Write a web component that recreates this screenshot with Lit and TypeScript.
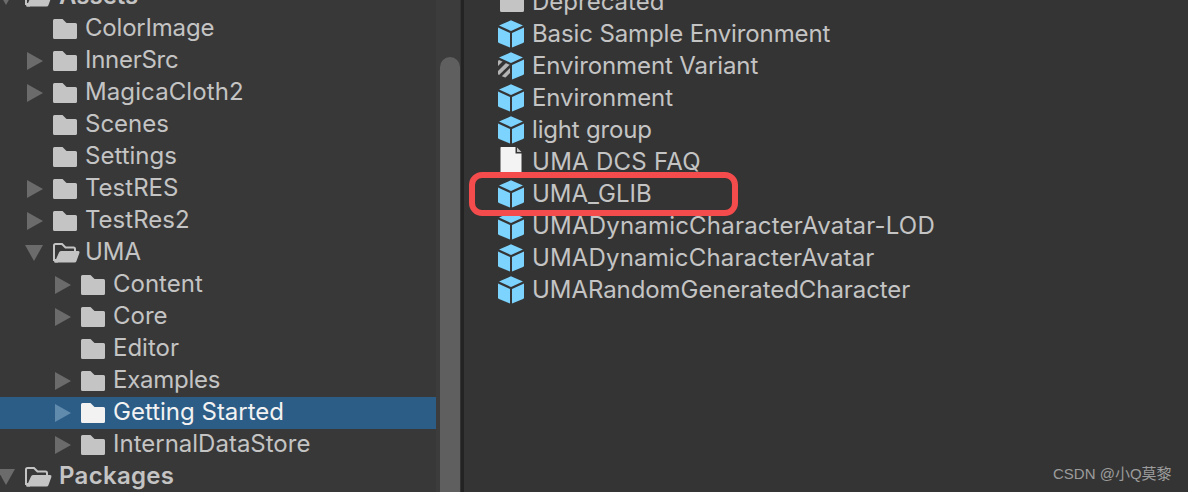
import { LitElement, html, css } from "lit";
import { customElement } from "lit/decorators.js";
import { styleMap } from "lit/directives/style-map.js";

type TreeRow = { name: string; level: number; arrow?: "right" | "down"; open?: boolean; bold?: boolean; selected?: boolean; ls?: number };

const tree: TreeRow[] = [
  { name: "Assets", level: 0, arrow: "down", open: true, bold: true },
  { name: "ColorImage", level: 1, ls: -0.2 },
  { name: "InnerSrc", level: 1, arrow: "right", ls: -0.27 },
  { name: "MagicaCloth2", level: 1, arrow: "right", ls: 0.1 },
  { name: "Scenes", level: 1 },
  { name: "Settings", level: 1 },
  { name: "TestRES", level: 1, arrow: "right" },
  { name: "TestRes2", level: 1, arrow: "right" },
  { name: "UMA", level: 1, arrow: "down", open: true },
  { name: "Content", level: 2, arrow: "right" },
  { name: "Core", level: 2, arrow: "right" },
  { name: "Editor", level: 2 },
  { name: "Examples", level: 2, arrow: "right", ls: -0.25 },
  { name: "Getting Started", level: 2, arrow: "right", selected: true, ls: 0 },
  { name: "InternalDataStore", level: 2, arrow: "right", ls: 0 },
  { name: "Packages", level: 0, arrow: "down", open: true, bold: true, ls: 0.3 },
];

const files: { name: string; icon: "folder" | "cube" | "variant" | "file"; ls: number }[] = [
  { name: "Deprecated", icon: "folder", ls: 0 },
  { name: "Basic Sample Environment", icon: "cube", ls: -0.12 },
  { name: "Environment Variant", icon: "variant", ls: -0.1 },
  { name: "Environment", icon: "cube", ls: -0.08 },
  { name: "light group", icon: "cube", ls: -0.18 },
  { name: "UMA DCS FAQ", icon: "file", ls: 0.27 },
  { name: "UMA_GLIB", icon: "cube", ls: 0 },
  { name: "UMADynamicCharacterAvatar-LOD", icon: "cube", ls: 0.2 },
  { name: "UMADynamicCharacterAvatar", icon: "cube", ls: 0.16 },
  { name: "UMARandomGeneratedCharacter", icon: "cube", ls: -0.07 },
];

const folderIcon = (cls = "") => html`<svg class="ico ${cls}" viewBox="0 0 24 20" width="24" height="20">
  <path d="M1.5 0H9.5L13.5 4H22.5A1.5 1.5 0 0 1 24 5.500V18.500A1.500 1.500 0 0 1 22.500 20H1.500A1.500 1.500 0 0 1 0 18.500V1.500A1.500 1.500 0 0 1 1.500 0Z" fill="currentColor"/>
</svg>`;

const openFolderIcon = () => html`<svg class="ico" viewBox="0 0 27 20" width="27" height="20">
  <path d="M1 18V2.500Q1 1 2.500 1H9L12.500 4.500H20.500Q22 4.500 22 6V8" fill="none" stroke="currentColor" stroke-width="2"/>
  <path d="M1.500 19.500L6 9.500Q6.500 8 8 8H25Q27 8 26.400 10L23.500 18Q23 19.500 21.500 19.500Z" fill="currentColor"/>
  <path d="M1 18Q1 19.500 2.500 19.500H5V16H1Z" fill="currentColor"/>
</svg>`;

const cubeIcon = () => html`<svg class="ico" viewBox="0 0 28 30" width="28" height="30">
  <path d="M13.500 1.500Q14 1 14.500 1.500L26 6.500L14 12L2 6.500Z" fill="#7cd3fd"/>
  <path d="M1 8.500L13 14V28.500L2 24Q1 23.500 1 22.500Z" fill="#7cd3fd"/>
  <path d="M27 8.500L15 14V28.500L26 24Q27 23.500 27 22.500Z" fill="#7cd3fd"/>
</svg>`;

const variantIcon = () => html`<svg class="ico" viewBox="0 0 28 30" width="28" height="30">
  <defs><clipPath id="left-face"><path d="M1 8.500L13 14V28.500L2 24Q1 23.500 1 22.500Z"/></clipPath></defs>
  <path d="M13.500 1.500Q14 1 14.500 1.500L26 6.500L14 12L2 6.500Z" fill="#7cd3fd"/>
  <path d="M27 8.500L15 14V28.500L26 24Q27 23.500 27 22.500Z" fill="#7cd3fd"/>
  <g clip-path="url(#left-face)" fill="#b4b4b4">
    <path d="M-2 13L5 6L7.500 8.500L-2 18Z"/>
    <path d="M-2 23L11 10L13.500 13L-2 28Z"/>
    <path d="M3 27L14 16V21L6 29Z"/>
  </g>
</svg>`;

const fileIcon = () => html`<svg class="ico" viewBox="0 0 22 30" width="22" height="30">
  <path d="M1 0H15.500V6.500H21.500V29Q21.500 30 20.500 30H1.500Q0.500 30 0.500 29V0.500Z" fill="#f3f3f3"/>
  <path d="M17 0.500L21.500 5H17Z" fill="#c4c4c4"/>
</svg>`;

const fileIcons = { folder: () => folderIcon("list-folder"), cube: cubeIcon, variant: variantIcon, file: fileIcon };

@customElement("app-root")
export class AppRoot extends LitElement {
  static styles = css`
    :host {
      display: block;
      position: relative;
      width: 1188px;
      height: 492px;
      overflow: hidden;
      background: #343434;
      font-family: Inter, "Noto Sans", sans-serif;
      font-size: 24px;
      color: #c4c4c4;
    }
    .layout { display: flex; height: 492px; }
    .tree { width: 436px; background: #383838; flex: none; }
    .tree-inner { margin-top: -19px; }
    .row { height: 32px; display: flex; align-items: center; white-space: nowrap; }
    .tree .row.selected { background: #2c5d87; color: #f2f2f2; }
    .cell-arrow { width: 25px; flex: none; display: flex; justify-content: flex-start; }
    .arrow-right { width: 0; height: 0; margin-left: -1px; border-left: 16px solid #6b6b6b; border-top: 9px solid transparent; border-bottom: 9px solid transparent; }
    .selected .arrow-right { border-left-color: #608bad; }
    .arrow-down { width: 0; height: 0; margin-left: -3px; border-top: 16px solid #6b6b6b; border-left: 9px solid transparent; border-right: 9px solid transparent; }
    .ico { flex: none; display: block; }
    .label { margin-left: 8px; padding-bottom: 3px; }
    .row.has-open .label { margin-left: 5px; }
    .row.has-open .label.bold { margin-left: 7px; font-weight: 600; }
    .lv0 { padding-left: 0; }
    .lv1 { padding-left: 28px; }
    .lv2 { padding-left: 56px; }
    .track { width: 24px; flex: none; background: #3c3c3c; padding: 57px 0 0 4px; box-sizing: border-box; }
    .thumb { width: 20px; height: 460px; background: #5f5f5f; border-radius: 10px 10px 0 0; }
    .divider { width: 4px; flex: none; background: #232323; border-left: 1px solid #333; box-sizing: border-box; }
    .list { flex: 1; padding-left: 33px; margin-top: -14px; }
    .list .row { gap: 7px; }
    .list .row .name { padding-bottom: 2px; }
    .list .row .ico-box { width: 28px; display: flex; justify-content: center; flex: none; }
    .list-folder { margin-left: 2px; }
    .mark { position: absolute; left: 469px; top: 172px; width: 269px; height: 44px; box-sizing: border-box; border: 6px solid #f44c4c; border-radius: 13px; }
    .wm { position: absolute; left: 1053px; top: 465px; font-family: "Liberation Sans", "Noto Sans CJK SC", sans-serif; font-size: 15px; color: #9c9c9c; line-height: 18px; white-space: nowrap; }
  `;

  render() {
    return html`
      <div class="layout">
        <div class="tree">
          <div class="tree-inner">
            ${tree.map(
              (r) => html`<div class="row lv${r.level} ${r.selected ? "selected" : ""} ${r.open ? "has-open" : ""}">
                <span class="cell-arrow">
                  ${r.arrow === "right" ? html`<span class="arrow-right"></span>` : r.arrow === "down" ? html`<span class="arrow-down"></span>` : ""}
                </span>
                ${r.open ? openFolderIcon() : folderIcon()}
                <span class="label ${r.bold ? "bold" : ""}" style=${styleMap({ letterSpacing: `${r.ls ?? 0}px` })}>${r.name}</span>
              </div>`
            )}
          </div>
        </div>
        <div class="track"><div class="thumb"></div></div>
        <div class="divider"></div>
        <div class="list">
          ${files.map(
            (f) => html`<div class="row">
              <span class="ico-box">${fileIcons[f.icon]()}</span>
              <span class="name" style=${styleMap({ letterSpacing: `${f.ls}px` })}>${f.name}</span>
            </div>`
          )}
        </div>
      </div>
      <div class="mark"></div>
      <div class="wm">CSDN @小Q莫黎</div>
    `;
  }
}
